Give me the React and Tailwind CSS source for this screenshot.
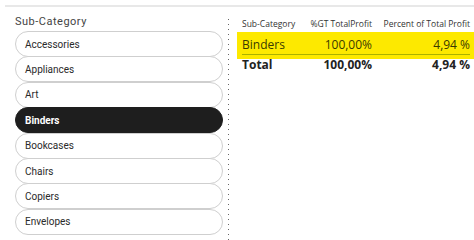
const items = ['Accessories', 'Appliances', 'Art', 'Binders', 'Bookcases', 'Chairs', 'Copiers', 'Envelopes'];

export default function App() {
    return (
        <div className="w-[474px] h-[240px] bg-white overflow-hidden relative" style={{ fontFamily: '"Open Sans", "Liberation Sans", sans-serif' }}>
            <div className="ml-[5px] mt-[5px] h-[2px] bg-[#e8e8e8]"></div>
            <div className="flex">
                {/* slicer */}
                <div className="w-[228px] pl-[15px] pt-[8px]">
                    <div className="text-[11px] leading-[14px] text-[#444] tracking-[0.5px] h-[16px]" style={{ fontFamily: 'Roboto, sans-serif' }}>Sub-Category</div>
                    <div className="flex flex-col w-[208px]">
                        {items.map((it) => (
                            <div
                                key={it}
                                className={
                                    it === 'Binders'
                                        ? 'h-[26px] -mb-[0.6px] rounded-full bg-[#1e1e1e] border border-[#1e1e1e] flex items-center pl-[9px] text-[10px] font-bold text-white'
                                        : 'h-[26px] -mb-[0.6px] rounded-full bg-white border border-[#cfcfcf] flex items-center pl-[9px] text-[10px] text-[#2a2a2a]'
                                }
                                style={{ fontFamily: 'Roboto, sans-serif' }}
                            >
                                {it}
                            </div>
                        ))}
                    </div>
                </div>
                {/* dotted separator */}
                <div className="w-px mt-[12px] h-[240px] bg-[repeating-linear-gradient(to_bottom,#666_0px,#666_1px,transparent_1px,transparent_5px)]"></div>
                {/* table */}
                <div className="flex-1 pt-[10px] pl-[8px]">
                    <div className="flex text-[8.5px] text-[#333] h-[14px] items-center pl-[5px] pr-[4px]">
                        <div className="w-[66px]">Sub-Category</div>
                        <div className="w-[64px] text-right">%GT TotalProfit</div>
                        <div className="flex-1 text-right">Percent of Total Profit</div>
                    </div>
                    <div className="bg-[#fde900] h-[27px] mt-[1px] pt-[5px] pl-[5px] pr-[4px]">
                        <div className="flex text-[12px] leading-[16px] text-[#3a3a00] border-b-[1.5px] border-[#a9b200] pb-[1px]">
                            <div className="w-[66px]">Binders</div>
                            <div className="w-[64px] text-right">100,00%</div>
                            <div className="flex-1 text-right">4,94 %</div>
                        </div>
                    </div>
                    <div className="flex text-[12px] leading-[14px] font-bold text-[#222] pl-[5px] pr-[4px] -mt-[1px]">
                        <div className="w-[66px]">Total</div>
                        <div className="w-[64px] text-right">100,00%</div>
                        <div className="flex-1 text-right">4,94 %</div>
                    </div>
                </div>
            </div>
        </div>
    );
}
